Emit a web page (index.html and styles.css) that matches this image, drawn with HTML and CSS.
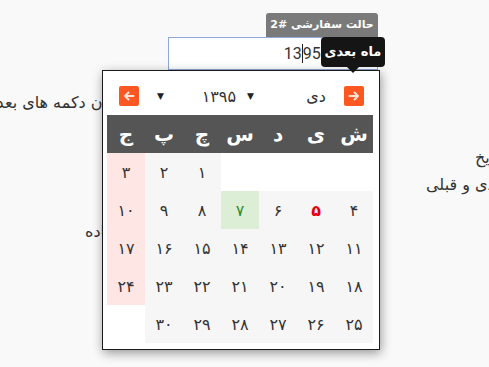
FILE: index.html
```html
<!DOCTYPE html>
<html lang="fa">
<head>
<meta charset="utf-8">
<title>Datepicker</title>
<link rel="stylesheet" href="styles.css">
</head>
<body>
<div class="page">
  <div class="field">
    <div class="field-label">حالت سفارشی #2</div>
    <div class="field-input"><span class="val">13<span class="caret"></span>95/10/07</span></div>
  </div>

  <div class="notes">
    <div class="line line-a">برای استفاده از امکان دکمه های بعدی</div>
    <div class="line line-b">انتخاب تاریخ</div>
    <div class="line line-c">بعدی و قبلی</div>
    <div class="line line-d">استفاده</div>
  </div>

  <div class="tooltip">ماه بعدی</div>

  <div class="picker">
    <div class="pk-head">
      <button class="pk-btn" type="button" aria-label="next">
        <svg width="20" height="20" viewBox="0 0 20 20"><path d="M5.5 10H14 M10.5 6.5 L14 10 L10.5 13.5" fill="none" stroke="#ffe3d8" stroke-width="2" stroke-linecap="round" stroke-linejoin="round"/></svg>
      </button>
      <div class="pk-sel pk-month"><span>دی</span><span class="tri">▼</span></div>
      <div class="pk-sel pk-year"><span>۱۳۹۵</span><span class="tri">▼</span></div>
      <div class="pk-gap"></div>
      <button class="pk-btn" type="button" aria-label="prev">
        <svg width="20" height="20" viewBox="0 0 20 20"><path d="M14.5 10H6 M9.5 6.5 L6 10 L9.5 13.5" fill="none" stroke="#ffe3d8" stroke-width="2" stroke-linecap="round" stroke-linejoin="round"/></svg>
      </button>
    </div>
    <div class="pk-grid">
      <div class="wd">ش</div><div class="wd">ی</div><div class="wd">د</div><div class="wd">س</div><div class="wd">چ</div><div class="wd">پ</div><div class="wd">ج</div>

      <div class="d empty"></div><div class="d empty"></div><div class="d empty"></div><div class="d empty"></div><div class="d">۱</div><div class="d">۲</div><div class="d fri">۳</div>

      <div class="d">۴</div><div class="d holiday">۵</div><div class="d">۶</div><div class="d today">۷</div><div class="d">۸</div><div class="d">۹</div><div class="d fri">۱۰</div>

      <div class="d">۱۱</div><div class="d">۱۲</div><div class="d">۱۳</div><div class="d">۱۴</div><div class="d">۱۵</div><div class="d">۱۶</div><div class="d fri">۱۷</div>

      <div class="d">۱۸</div><div class="d">۱۹</div><div class="d">۲۰</div><div class="d">۲۱</div><div class="d">۲۲</div><div class="d">۲۳</div><div class="d fri">۲۴</div>

      <div class="d">۲۵</div><div class="d">۲۶</div><div class="d">۲۷</div><div class="d">۲۸</div><div class="d">۲۹</div><div class="d">۳۰</div><div class="d empty"></div>
    </div>
  </div>
</div>
</body>
</html>
```

FILE: styles.css
```css
* { box-sizing: border-box; }

html, body {
  margin: 0;
  padding: 0;
  background: #f9f9f9;
}

body {
  font-family: "DejaVu Sans", sans-serif;
  color: #333;
}

.page {
  position: relative;
  width: 489px;
  height: 367px;
  overflow: hidden;
}

/* field */
.field {
  padding-top: 13px;
  margin-left: 168px;
  width: 210px;
}

.field-label {
  margin-left: 98px;
  width: 112px;
  height: 24px;
  background: #7a7a7a;
  color: #fff;
  font-weight: bold;
  font-size: 11px;
  line-height: 24px;
  text-align: center;
  white-space: nowrap;
  border-radius: 3px 3px 0 0;
  direction: rtl;
}

.field-input {
  height: 33px;
  background: #fff;
  border: 1px solid #8fa8d8;
  display: flex;
  align-items: center;
  justify-content: flex-end;
  padding-right: 7px;
  font-family: Roboto, "Liberation Sans", sans-serif;
  font-size: 16px;
  color: #333;
}

.caret {
  display: inline-block;
  width: 1px;
  height: 19px;
  background: #222;
  vertical-align: -4px;
}

/* background notes */
.notes {
  padding-top: 20px;
  font-size: 16px;
  line-height: 26px;
  color: #333;
}

.line {
  direction: rtl;
  white-space: nowrap;
  width: max-content;
}

.line-a { margin-left: -16px; }
.line-b { margin-left: 475px; margin-top: 29px; }
.line-c { margin-left: 426px; margin-top: 1px; }
.line-d { margin-left: 85px; margin-top: 21px; }

/* tooltip */
.tooltip {
  position: absolute;
  left: 321px;
  top: 37px;
  width: 64px;
  height: 30px;
  background: #151515;
  color: #fff;
  border-radius: 4px;
  font-size: 13px;
  font-weight: bold;
  line-height: 30px;
  text-align: center;
  white-space: nowrap;
  direction: rtl;
  z-index: 5;
}

.tooltip::after {
  content: "";
  position: absolute;
  left: 26px;
  bottom: -6px;
  border-left: 6px solid transparent;
  border-right: 6px solid transparent;
  border-top: 6px solid #151515;
}

/* picker */
.picker {
  position: absolute;
  left: 102px;
  top: 70px;
  width: 278px;
  height: 280px;
  background: #fff;
  border: 1px solid #1a1a1a;
  padding: 15px 6px 6px 3px;
  box-shadow: 1px 3px 10px rgba(0, 0, 0, 0.4);
  z-index: 4;
}

.pk-head {
  direction: rtl;
  display: flex;
  align-items: center;
  height: 20px;
  padding: 0 9px 0 12px;
  margin-bottom: 9px;
  font-size: 16px;
  color: #333;
}

.pk-btn {
  width: 20px;
  height: 20px;
  padding: 0;
  border: 0;
  border-radius: 2px;
  background: #ff5722;
  display: flex;
  align-items: center;
  justify-content: center;
}

.pk-btn svg { display: block; }

.pk-sel {
  display: flex;
  justify-content: space-between;
  align-items: center;
  height: 20px;
}

.pk-month { width: 97px; padding-right: 18px; }
.pk-year { width: 90px; padding-right: 11px; }
.pk-gap { width: 18px; }

.tri {
  font-size: 9px;
  color: #222;
}

.pk-grid {
  direction: rtl;
  display: grid;
  grid-template-columns: repeat(7, 38px);
  grid-auto-rows: 38px;
}

.wd {
  background: #555;
  color: #fff;
  font-weight: bold;
  font-size: 20px;
  display: flex;
  align-items: center;
  justify-content: center;
}

.d {
  background: #f6f6f6;
  font-size: 16px;
  color: #333;
  display: flex;
  align-items: center;
  justify-content: center;
}

.d.empty { background: #fff; }
.d.fri { background: #fde6e4; }
.d.holiday { color: #e4000f; font-weight: bold; }
.d.today { background: #dcefd6; color: #2f8a2f; }
```
